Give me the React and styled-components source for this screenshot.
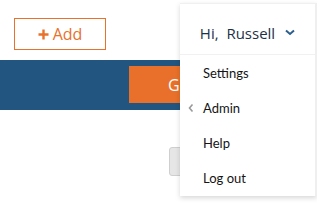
import React from "react";
import styled, { createGlobalStyle } from "styled-components";

const GlobalStyle = createGlobalStyle`
  html, body {
    margin: 0;
    padding: 0;
    background: #ffffff;
    width: 317px;
    height: 215px;
    overflow: hidden;
  }
`;

const Page = styled.div`
  position: relative;
  width: 317px;
  height: 215px;
  font-family: "Open Sans", sans-serif;
`;

const TopBar = styled.div`
  height: 60px;
  padding: 18px 0 0 14px;
  box-sizing: border-box;
`;

const OutlineButton = styled.button`
  width: 92px;
  height: 32px;
  box-sizing: border-box;
  border: 1px solid #e8712b;
  background: #fff;
  color: #e8712b;
  font-family: "Open Sans", sans-serif;
  font-size: 16px;
  display: flex;
  align-items: center;
  justify-content: center;
  gap: 4px;
  padding: 0 0 1px 0;
  svg {
    margin-top: 1px;
  }
`;

const Band = styled.div`
  height: 50px;
  background: #22557f;
  padding: 6px 0 0 129px;
  box-sizing: border-box;
`;

const GoButton = styled.div`
  width: 120px;
  height: 37px;
  background: #e8702a;
  color: #fff;
  font-size: 16px;
  display: flex;
  align-items: center;
  padding-left: 39px;
  box-sizing: border-box;
`;

const Row = styled.div`
  margin-top: 37px;
  padding-left: 169px;
`;

const GrayBox = styled.div`
  width: 60px;
  height: 29px;
  background: #e6e6e6;
  border: 1px solid #cfcfcf;
  border-radius: 3px 0 0 3px;
  box-sizing: border-box;
`;

const Menu = styled.div`
  position: absolute;
  left: 180px;
  top: 3px;
  width: 137px;
  height: 193px;
  background: #fff;
  border-right: 2px solid #efefef;
  border-top: 1px solid #f0f0f0;
  box-sizing: border-box;
  box-shadow: 0 2px 5px rgba(0, 0, 0, 0.16);
`;

const MenuHeader = styled.div`
  height: 51px;
  display: flex;
  align-items: center;
  justify-content: center;
  gap: 10px;
  border-bottom: 1px solid #f1f1f1;
  padding-top: 7px;
  box-sizing: border-box;
  color: #1e3246;
  font-family: "Open Sans", sans-serif;
  font-size: 15px;
  white-space: pre;
`;

const MenuItem = styled.div`
  position: relative;
  height: 35px;
  display: flex;
  align-items: center;
  padding-left: 23px;
  font-family: Lato, sans-serif;
  font-size: 13px;
  color: #151515;
  svg {
    position: absolute;
    left: 8px;
    top: 14px;
  }
`;

export default function App() {
  return (
    <Page>
      <GlobalStyle />
      <TopBar>
        <OutlineButton>
          <svg width="11" height="11" viewBox="0 0 11 11">
            <path d="M5.5 0.5v10M0.5 5.5h10" stroke="#e8712b" strokeWidth="2.4" fill="none" />
          </svg>
          <span>Add</span>
        </OutlineButton>
      </TopBar>
      <Band>
        <GoButton>G</GoButton>
      </Band>
      <Row>
        <GrayBox />
      </Row>
      <Menu>
        <MenuHeader>
          <span>Hi,  Russell</span>
          <svg width="10" height="7" viewBox="0 0 10 7">
            <polyline points="1,1.5 5,5 9,1.5" fill="none" stroke="#2b5f8e" strokeWidth="2" />
          </svg>
        </MenuHeader>
        <MenuItem>Settings</MenuItem>
        <MenuItem>
          <svg width="6" height="8" viewBox="0 0 6 8">
            <polyline points="4.5,0.5 1.5,4 4.5,7.5" fill="none" stroke="#9a9a9a" strokeWidth="1.6" />
          </svg>
          Admin
        </MenuItem>
        <MenuItem>Help</MenuItem>
        <MenuItem>Log out</MenuItem>
      </Menu>
    </Page>
  );
}
